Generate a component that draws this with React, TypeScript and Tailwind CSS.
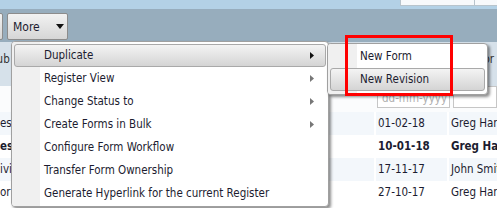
import React from "react";

const font = { fontFamily: '"DejaVu Sans Condensed", "DejaVu Sans", sans-serif' };

const menuItems = [
  { label: "Duplicate", sub: true, active: true },
  { label: "Register View", sub: true },
  { label: "Change Status to", sub: true },
  { label: "Create Forms in Bulk", sub: true },
  { label: "Configure Form Workflow" },
  { label: "Transfer Form Ownership" },
  { label: "Generate Hyperlink for the current Register" },
];

const rows = [
  { a: "es", date: "01-02-18", who: "Greg Harris" },
  { a: "es", date: "10-01-18", who: "Greg Harris", bold: true },
  { a: "ivi", date: "17-11-17", who: "John Smith" },
  { a: "or", date: "27-10-17", who: "Greg Harris" },
];

function Arrow({ dark }: { dark?: boolean }) {
  return (
    <svg width="4" height="7" viewBox="0 0 4 7" className="shrink-0">
      <path d="M0 0 L4 3.5 L0 7 Z" fill={dark ? "#111" : "#777"} />
    </svg>
  );
}

function MenuRow({ label, sub, active }: { label: string; sub?: boolean; active?: boolean }) {
  return (
    <div
      className={
        "mx-[2px] flex h-[23px] items-center rounded-[3px] border pl-[29px] pr-[11px] " +
        (active
          ? "border-[#a9a9a9] bg-gradient-to-b from-[#f4f4f4] to-[#d4d4d4]"
          : "border-transparent")
      }
    >
      <span className="flex-1 text-[11.5px] text-[#1c1c30]">{label}</span>
      {sub ? <Arrow dark={active} /> : null}
    </div>
  );
}

export default function App() {
  return (
    <div className="relative h-[208px] w-[497px] overflow-hidden bg-white" style={font}>
      {/* top band */}
      <div className="flex h-[9px] justify-end bg-[#b3d1e6]">
        <div className="h-[6px] w-[74px] border-b border-l border-[#b8c4cc] bg-[#f7f9fb]" />
        <div className="h-[6px] w-[23px] border-b border-l border-[#b8c4cc] bg-[#f7f9fb]" />
      </div>

      {/* toolbar */}
      <div className="flex h-[33px] items-start gap-[4px] bg-[#97adbd] pt-[4px]">
        <div className="ml-[-10px] h-[27px] w-[13px] rounded-[2px] border border-[#8c8c8c] bg-gradient-to-b from-[#f2f2f2] to-[#d6d6d6]" />
        <div className="flex h-[27px] w-[61px] items-center rounded-[2px] border border-[#8c8c8c] bg-gradient-to-b from-[#f2f2f2] to-[#d6d6d6] pl-[5px]">
          <span className="text-[12px] text-[#1c1c30]">More</span>
          <svg width="8" height="5" viewBox="0 0 8 5" className="ml-[16px]">
            <path d="M0 0 H8 L4 5 Z" fill="#111" />
          </svg>
        </div>
      </div>

      {/* grid */}
      <div className="flex h-[44px] items-start bg-[#d6e1ea]">
        <span className="ml-[-10px] mt-[9px] text-[11.5px] text-[#333]">Sub</span>
        <span className="ml-auto mr-[3px] mt-[9px] text-[11.5px] text-[#333]">Creator</span>
      </div>
      <div className="flex h-[26px] items-start bg-[#fbfcfd]">
        <div className="ml-[377px] h-[22px] w-[73px] border border-[#c6c6c6] bg-white pl-[4px] pt-[3px] text-[11.5px] text-[#b0b0b0]">
          dd-mm-yyyy
        </div>
        <div className="ml-[3px] h-[22px] flex-1 border border-[#c6c6c6] bg-white" />
      </div>
      {rows.map((r, i) => (
        <div
          key={i}
          className={
            "flex h-[23px] items-center text-[11.5px] text-[#1c1c30] " +
            (i % 2 === 0 ? "bg-[#f3f7fb]" : "bg-white") +
            (r.bold ? " font-bold" : "")
          }
        >
          <div className="w-[374px] overflow-hidden whitespace-nowrap">{r.a}</div>
          <div className="h-full w-[75px] border-l-2 border-r-2 border-white pl-[2px] leading-[23px]">{r.date}</div>
          <div className="flex-1 overflow-hidden whitespace-nowrap pl-[2px]">{r.who}</div>
        </div>
      ))}

      {/* context menu */}
      <div className="absolute left-[11px] top-[41px] h-[166px] w-[318px] overflow-hidden rounded-[4px] border border-[#a0a0a0] bg-white pt-[2px] shadow-[2px_2px_3px_rgba(0,0,0,0.45)]">
        <div className="absolute bottom-0 left-0 top-0 w-[28px] bg-[#f0f0f0]" />
        <div className="relative">
          {menuItems.map((m) => (
            <MenuRow key={m.label} {...m} />
          ))}
        </div>
      </div>

      {/* submenu */}
      <div className="absolute left-[327px] top-[43px] h-[52px] w-[161px] overflow-hidden rounded-[4px] border border-[#a0a0a0] bg-white pt-[1px] shadow-[2px_2px_3px_rgba(0,0,0,0.45)]">
        <div className="absolute bottom-0 left-0 top-0 w-[29px] bg-[#f0f0f0]" />
        <div className="relative">
          <MenuRow label="New Form" />
          <MenuRow label="New Revision" active />
        </div>
      </div>

      {/* highlight box */}
      <div className="absolute left-[345px] top-[35px] h-[61px] w-[108px] border-[3px] border-[#ff0000]" />
    </div>
  );
}
